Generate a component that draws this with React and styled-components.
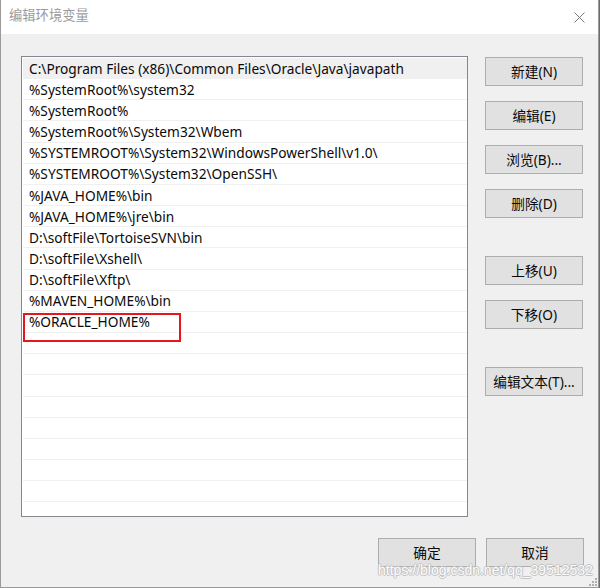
import React from 'react';
import styled, { createGlobalStyle } from 'styled-components';

const GlobalStyle = createGlobalStyle`
    html, body {
        margin:0;padding:0;
        background-color:#6d6d6d;
    }
    body{
        width:600px;height:588px;
        overflow:hidden;
        font-family:"Noto Sans","Noto Sans CJK SC",sans-serif;
    }
`;

const Window = styled.div`
    position:relative;
    box-sizing:border-box;
    width:599px;height:588px;
    display:flex;
    flex-direction:column;
    background-color:#f0f0f0;
    border:1px solid #9a9a9a;
    border-top:none;
`;

const TitleBar = styled.div`
    height:34px;
    flex:none;
    display:flex;
    flex-direction:row;
    align-items:center;
    justify-content:space-between;
    padding:0 13px 0 8px;
    background-color:#ffffff;
    .title{
        font-family:"Noto Sans CJK SC",sans-serif;
        font-size:13.3px;
        color:#9b9b9b;
        padding-bottom:5px;
    }
`;

const Body = styled.div`
    flex:1;
    display:flex;
    flex-direction:row;
    align-items:flex-start;
    gap:17px;
    padding:22px 0 0 20px;
`;

const ListBox = styled.div`
    box-sizing:border-box;
    width:447px;height:461px;
    border:1px solid #828790;
    background-color:#ffffff;
    padding:1px 0 0 1px;
    overflow:hidden;
`;

const Row = styled.div`
    position:relative;
    box-sizing:border-box;
    height:21.17px;
    display:flex;
    align-items:center;
    padding-left:6px;
    border-bottom:1px solid #f0f0f0;
    background-color:${props => props.selected ? '#f0f0f0' : '#ffffff'};
    font-size:13.7px;
    color:#0a0a0a;
    white-space:nowrap;
`;

const Mark = styled.span`
    position:absolute;
    z-index:2;
    left:0;top:1px;
    box-sizing:border-box;
    width:158px;height:29px;
    border:2px solid #e5161e;
    pointer-events:none;
`;

const ButtonColumn = styled.div`
    display:flex;
    flex-direction:column;
    padding-top:1px;
`;

const Button = styled.button`
    box-sizing:border-box;
    width:98px;height:29px;
    margin-top:${props => props.gap || 0}px;
    padding:0 0 2px 0;
    border:1px solid #adadad;
    background-color:#e1e1e1;
    font-family:"Noto Sans","Noto Sans CJK SC",sans-serif;
    font-size:13.7px;
    color:#0a0a0a;
`;

const Footer = styled.div`
    display:flex;
    flex-direction:row;
    justify-content:flex-end;
    gap:10px;
    padding:0 14px 20px 0;
`;

const Watermark = styled.span`
    position:absolute;
    left:377px;top:562px;
    font-family:"Liberation Sans",sans-serif;
    font-size:14px;
    line-height:16px;
    color:rgba(255,255,255,0.95);
    text-shadow:1px 0 0 #c4c4c4, -1px 0 0 #c4c4c4, 0 1px 0 #c4c4c4, 0 -1px 0 #c4c4c4;
    white-space:nowrap;
    pointer-events:none;
`;

const Grip = styled.svg`
    position:absolute;
    right:1px;bottom:1px;
`;

const paths = [
    'C:\\Program Files (x86)\\Common Files\\Oracle\\Java\\javapath',
    '%SystemRoot%\\system32',
    '%SystemRoot%',
    '%SystemRoot%\\System32\\Wbem',
    '%SYSTEMROOT%\\System32\\WindowsPowerShell\\v1.0\\',
    '%SYSTEMROOT%\\System32\\OpenSSH\\',
    '%JAVA_HOME%\\bin',
    '%JAVA_HOME%\\jre\\bin',
    'D:\\softFile\\TortoiseSVN\\bin',
    'D:\\softFile\\Xshell\\',
    'D:\\softFile\\Xftp\\',
    '%MAVEN_HOME%\\bin',
    '%ORACLE_HOME%',
];

const rows = [...paths, ...Array(9).fill('')];

const sideButtons = [
    { label: '新建(N)', gap: 0 },
    { label: '编辑(E)', gap: 15 },
    { label: '浏览(B)...', gap: 15 },
    { label: '删除(D)', gap: 15 },
    { label: '上移(U)', gap: 38 },
    { label: '下移(O)', gap: 15 },
    { label: '编辑文本(T)...', gap: 38 },
];

const App = () => {
    return (
        <>
            <GlobalStyle />
            <Window>
                <TitleBar>
                    <span className="title">编辑环境变量</span>
                    <svg width="11" height="11" viewBox="0 0 11 11">
                        <path d="M0.5 0.5 L10.5 10.5 M10.5 0.5 L0.5 10.5" stroke="#7a7a7a" strokeWidth="1" fill="none" />
                    </svg>
                </TitleBar>
                <Body>
                    <ListBox>
                        {rows.map((text, i) => (
                            <Row key={i} selected={i === 0}>
                                {text}
                                {text === '%ORACLE_HOME%' && <Mark />}
                            </Row>
                        ))}
                    </ListBox>
                    <ButtonColumn>
                        {sideButtons.map((b) => (
                            <Button key={b.label} gap={b.gap}>{b.label}</Button>
                        ))}
                    </ButtonColumn>
                </Body>
                <Footer>
                    <Button>确定</Button>
                    <Button>取消</Button>
                </Footer>
                <Watermark>https://blog.csdn.net/qq_39512532</Watermark>
                <Grip width="9" height="9" viewBox="0 0 9 9">
                    {[[7, 1], [4, 4], [7, 4], [1, 7], [4, 7], [7, 7]].map(([x, y]) => (
                        <rect key={`${x}-${y}`} x={x} y={y} width="2" height="2" fill="#b0b0b0" />
                    ))}
                </Grip>
            </Window>
        </>
    );
};

export default App;
